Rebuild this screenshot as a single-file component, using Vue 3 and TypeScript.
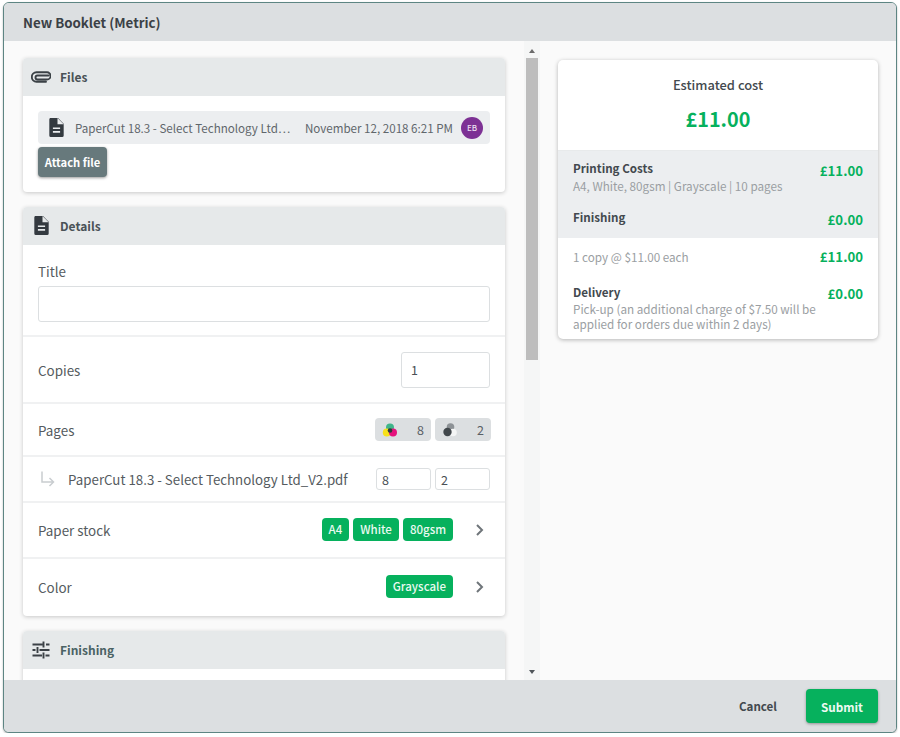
<script setup lang="ts">
const paperTags = ["A4", "White", "80gsm"];
</script>

<template>
  <div class="dialog">
    <header class="dialog-head">New Booklet (Metric)</header>

    <div class="dialog-body">
      <div class="left-pane">
        <div class="scroll-content">
          <section class="card">
            <div class="card-head">
              <svg class="head-icon" viewBox="0 0 20 20" width="20" height="20">
                <path d="M17.5 8.500H6.500a2 2 0 0 0 0 4h9.500a3.600 3.600 0 0 0 0-7.200H5.500a4.600 4.600 0 0 0 0 9.400H15" fill="none" stroke="#3b4146" stroke-width="1.900" stroke-linecap="round" />
              </svg>
              <span>Files</span>
            </div>
            <div class="files-body">
              <div class="file-row">
                <svg class="file-icon" viewBox="1 1 14 18.500" width="15" height="19">
                  <path d="M2 1h7.500L15 6.500V18a1.500 1.500 0 0 1-1.500 1.500h-11A1.500 1.500 0 0 1 1 18V2.500A1.500 1.500 0 0 1 2 1z" fill="#343a40" />
                  <path d="M9 1v6h6" fill="#eceef0" />
                  <path d="M4.500 11h7M4.500 14.500h7" stroke="#eceef0" stroke-width="1.500" />
                </svg>
                <span class="file-name">PaperCut 18.3 - Select Technology Ltd…</span>
                <span class="file-date">November 12, 2018 6:21 PM</span>
                <span class="avatar">EB</span>
              </div>
              <button class="attach-btn">Attach file</button>
            </div>
          </section>

          <section class="card">
            <div class="card-head">
              <svg class="head-icon doc" viewBox="1 1 14 18.500" width="15" height="19">
                <path d="M2 1h7.500L15 6.500V18a1.500 1.500 0 0 1-1.500 1.500h-11A1.500 1.500 0 0 1 1 18V2.500A1.500 1.500 0 0 1 2 1z" fill="#343a40" />
                <path d="M9 1v6h6" fill="#e6e9ea" />
                <path d="M4.500 11h7M4.500 14.500h7" stroke="#e6e9ea" stroke-width="1.500" />
              </svg>
              <span>Details</span>
            </div>

            <div class="row title-row">
              <label class="field-label">Title</label>
              <input class="text-input" type="text" />
            </div>

            <div class="row copies-row">
              <span class="field-label">Copies</span>
              <input class="text-input copies-input" type="text" value="1" />
            </div>

            <div class="row pages-row">
              <span class="field-label">Pages</span>
              <div class="pair chips">
                <div class="page-chip">
                  <svg viewBox="0 0 16 16" width="16" height="16">
                    <circle cx="8" cy="5.500" r="4" fill="#3fb58a" />
                    <circle cx="4.800" cy="10.500" r="4" fill="#f7e11b" />
                    <circle cx="11" cy="10.500" r="4" fill="#e5127d" />
                    <circle cx="8" cy="8.500" r="2.300" fill="#2f3a3a" />
                  </svg>
                  <span>8</span>
                </div>
                <div class="page-chip">
                  <svg viewBox="0 0 16 16" width="16" height="16">
                    <circle cx="8.500" cy="5" r="3.800" fill="#8d9296" />
                    <circle cx="11" cy="10.500" r="3.800" fill="#f4f5f5" />
                    <circle cx="5.500" cy="10" r="4.200" fill="#41474b" />
                  </svg>
                  <span>2</span>
                </div>
              </div>
            </div>

            <div class="row file-pages-row">
              <svg class="return-icon" viewBox="0 0 16 18" width="16" height="18">
                <path d="M2 1.500V12h11.500M9.500 8l4 4-4 4" fill="none" stroke="#c9cdd0" stroke-width="1.500" />
              </svg>
              <span class="sub-name">PaperCut 18.3 - Select Technology Ltd_V2.pdf</span>
              <div class="pair">
                <input class="text-input small-input" type="text" value="8" />
                <input class="text-input small-input" type="text" value="2" />
              </div>
            </div>

            <div class="row select-row">
              <span class="field-label">Paper stock</span>
              <div class="tags">
                <span v-for="tag in paperTags" :key="tag" class="tag">{{ tag }}</span>
              </div>
              <svg class="chevron" viewBox="0 0 10 14" width="10" height="14">
                <path d="M2 2l5 5-5 5" fill="none" stroke="#6f757a" stroke-width="2" />
              </svg>
            </div>

            <div class="row select-row last">
              <span class="field-label">Color</span>
              <div class="tags">
                <span class="tag">Grayscale</span>
              </div>
              <svg class="chevron" viewBox="0 0 10 14" width="10" height="14">
                <path d="M2 2l5 5-5 5" fill="none" stroke="#6f757a" stroke-width="2" />
              </svg>
            </div>
          </section>

          <section class="card">
            <div class="card-head">
              <svg class="head-icon" viewBox="0 0 20 20" width="20" height="20">
                <path d="M1.500 4.500h10M15 4.500h3.500M12.500 1.500v6M1.500 10h3M8.500 10h10M6.500 7v6M1.500 15.500h9.500M14.500 15.500h4M12.500 12.500v6" fill="none" stroke="#3b4146" stroke-width="1.900" />
              </svg>
              <span class="finishing">Finishing</span>
            </div>
            <div class="finishing-body"></div>
          </section>
        </div>

        <div class="scrollbar">
          <span class="arrow up"></span>
          <div class="track"><div class="thumb"></div></div>
          <span class="arrow down"></span>
        </div>
      </div>

      <aside class="right-pane">
        <div class="cost-card">
          <div class="cost-top">
            <div class="cost-title">Estimated cost</div>
            <div class="cost-total">£11.00</div>
          </div>

          <div class="cost-grey">
            <div class="cost-line">
              <div>
                <div class="line-title">Printing Costs</div>
                <div class="line-desc">A4, White, 80gsm | Grayscale | 10 pages</div>
              </div>
              <span class="price">£11.00</span>
            </div>
            <div class="cost-line finishing-line">
              <div class="line-title">Finishing</div>
              <span class="price">£0.00</span>
            </div>
          </div>

          <div class="cost-white">
            <div class="cost-line copy-line">
              <div class="line-desc">1 copy @ $11.00 each</div>
              <span class="price">£11.00</span>
            </div>
            <div class="cost-line delivery-line">
              <div>
                <div class="line-title">Delivery</div>
                <div class="line-desc">Pick-up (an additional charge of $7.50 will be applied for orders due within 2 days)</div>
              </div>
              <span class="price">£0.00</span>
            </div>
          </div>
        </div>
      </aside>
    </div>

    <footer class="dialog-foot">
      <button class="cancel-btn">Cancel</button>
      <button class="submit-btn">Submit</button>
    </footer>
  </div>
</template>

<style>
html,
body {
  margin: 0;
  background: #fff;
}
</style>

<style scoped>
.dialog {
  box-sizing: border-box;
  width: 894px;
  height: 731px;
  margin: 2px 0 0 3px;
  border: 1px solid #5d8583;
  border-radius: 6px;
  overflow: hidden;
  display: flex;
  flex-direction: column;
  background: #fafafa;
  color: #3b4146;
  font-family: "Noto Sans CJK SC", "Noto Sans", sans-serif;
  box-shadow: 0 1px 2px rgba(0, 0, 0, 0.3);
}

.dialog-head {
  flex: none;
  height: 38px;
  padding-left: 19px;
  line-height: 39px;
  font-size: 13.300px;
  font-weight: 700;
  background: #dcdfe1;
}

.dialog-body {
  flex: 1;
  min-height: 0;
  display: flex;
}

.left-pane {
  flex: none;
  width: 536px;
  display: flex;
  overflow: hidden;
}

.scroll-content {
  flex: 1;
  min-width: 0;
  padding: 17px 19px 0 19px;
  overflow: hidden;
  display: flex;
  flex-direction: column;
  gap: 15px;
}

.card {
  flex: none;
  background: #fff;
  border-radius: 4px;
  box-shadow: 0 1px 4px rgba(0, 0, 0, 0.2);
}

.card-head {
  height: 38px;
  padding-left: 8px;
  display: flex;
  align-items: center;
  gap: 9px;
  background: #e6e9ea;
  border-radius: 4px 4px 0 0;
  font-size: 12px;
  font-weight: 700;
  color: #4a5257;
}

.card-head span {
  margin-bottom: 2px;
}

.head-icon.doc {
  margin: 0 2px 1px 3px;
}

.finishing {
  color: #4a6264;
}

.files-body {
  padding: 15px 15px 15px;
}

.file-row {
  height: 33px;
  display: flex;
  align-items: center;
  padding: 0 7px 0 11px;
  background: #eceef0;
  border-radius: 4px;
  font-size: 11.600px;
  color: #5f666b;
}

.file-icon {
  flex: none;
}

.file-name {
  flex: 1;
  margin-left: 11px;
  white-space: nowrap;
}

.file-date {
  margin-right: 8px;
  white-space: nowrap;
}

.avatar {
  flex: none;
  width: 22px;
  height: 22px;
  border-radius: 50%;
  background: #7d3194;
  color: #eadff0;
  font-size: 8px;
  font-weight: 500;
  line-height: 22px;
  text-align: center;
}

.attach-btn {
  display: block;
  margin-top: 3px;
  width: 69px;
  height: 30px;
  padding: 0;
  border: none;
  border-radius: 4px;
  background: #67797c;
  color: #fff;
  font-family: inherit;
  font-size: 11.200px;
  font-weight: 700;
  box-shadow: 0 1px 3px rgba(0, 0, 0, 0.4);
}

.row {
  box-sizing: border-box;
  padding: 0 15px;
  border-bottom: 2px solid #f0f1f2;
  display: flex;
  align-items: center;
}

.row.last {
  border-bottom: none;
}

.field-label {
  font-size: 13.400px;
  color: #555b60;
}

.text-input {
  box-sizing: border-box;
  border: 1px solid #dcdfe1;
  border-radius: 3px;
  background: #fff;
  color: #4a5055;
  font-family: inherit;
  font-size: 12.500px;
  outline: none;
}

.title-row {
  height: 92px;
  padding-top: 16px;
  flex-direction: column;
  align-items: stretch;
}

.title-row .field-label {
  line-height: 20px;
  margin-bottom: 5px;
}

.title-row .text-input {
  height: 36px;
}

.copies-row {
  height: 67px;
  justify-content: space-between;
}

.copies-input {
  width: 89px;
  height: 36px;
  padding: 0 9px;
}

.pages-row {
  height: 53px;
  justify-content: space-between;
}

.pair {
  display: flex;
  gap: 4px;
}

.chips {
  margin-right: -1px;
}

.page-chip {
  box-sizing: border-box;
  width: 56px;
  height: 23px;
  padding: 0 7px;
  display: flex;
  align-items: center;
  justify-content: space-between;
  background: #dcdfe1;
  border-radius: 4px;
  font-size: 12.500px;
  color: #5a6065;
}

.file-pages-row {
  height: 46px;
}

.return-icon {
  flex: none;
  margin-left: 2px;
}

.sub-name {
  flex: 1;
  margin-left: 12px;
  font-size: 13.300px;
  color: #555b60;
  white-space: nowrap;
}

.small-input {
  width: 55px;
  height: 22px;
  padding: 0 5px;
}

.select-row {
  height: 56px;
}

.select-row.last {
  height: 57px;
  padding-bottom: 1px;
}

.select-row .field-label {
  flex: 1;
}

.tags {
  display: flex;
  gap: 4px;
  margin-bottom: 2px;
}

.tag {
  height: 23px;
  padding: 0 7px;
  background: #06b15d;
  border-radius: 4px;
  color: #eafaf1;
  font-size: 11.500px;
  font-weight: 500;
  line-height: 22px;
}

.chevron {
  margin: 0 5px 0 22px;
}

.finishing-body {
  height: 40px;
}

.scrollbar {
  flex: none;
  width: 16px;
  display: flex;
  flex-direction: column;
  align-items: center;
  background: #f5f6f6;
}

.arrow {
  flex: none;
  width: 0;
  height: 0;
  border-left: 3.500px solid transparent;
  border-right: 3.500px solid transparent;
}

.arrow.up {
  margin: 8px 0 5px;
  border-bottom: 4px solid #6b6b6b;
}

.arrow.down {
  margin: 6px 0;
  border-top: 4px solid #50555a;
}

.track {
  flex: 1;
  width: 12px;
}

.thumb {
  width: 100%;
  height: 302px;
  background: #bdbdbd;
}

.right-pane {
  flex: 1;
  min-width: 0;
  padding: 19px 18px 0 18px;
}

.cost-card {
  width: 320px;
  background: #fff;
  border-radius: 5px;
  overflow: hidden;
  box-shadow: 0 1px 4px rgba(0, 0, 0, 0.28);
}

.cost-top {
  box-sizing: border-box;
  height: 91px;
  padding-top: 15px;
  text-align: center;
  border-bottom: 1px solid #e8eaeb;
}

.cost-title {
  font-size: 12.900px;
  font-weight: 500;
  line-height: 20px;
  color: #43494e;
}

.cost-total {
  margin-top: 11px;
  font-size: 19.800px;
  font-weight: 700;
  line-height: 26px;
  color: #06b15d;
}

.cost-grey {
  box-sizing: border-box;
  height: 87px;
  padding: 9px 15px 0;
  background: #eceef0;
}

.cost-white {
  padding: 10px 15px 0;
  height: 101px;
  box-sizing: border-box;
}

.cost-line {
  display: flex;
  justify-content: space-between;
  align-items: flex-start;
}

.finishing-line {
  margin-top: 16px;
}

.copy-line .price {
  margin-top: -1px;
}

.delivery-line {
  margin-top: 18px;
}

.delivery-line > div {
  width: 250px;
}

.delivery-line .line-desc {
  margin-top: 0;
}

.delivery-line .price {
  margin-top: 0;
}

.line-title {
  font-size: 11.600px;
  font-weight: 700;
  line-height: 17px;
  color: #43494e;
}

.line-desc {
  font-size: 11.700px;
  line-height: 15px;
  margin-top: 1px;
  color: #9a9ea2;
}

.price {
  flex: none;
  margin-top: 1px;
  font-size: 13.200px;
  font-weight: 700;
  line-height: 19px;
  color: #06b15d;
}

.dialog-foot {
  flex: none;
  height: 52px;
  padding-right: 18px;
  display: flex;
  align-items: center;
  justify-content: flex-end;
  gap: 29px;
  background: #dcdfe1;
}

.cancel-btn {
  padding: 0;
  border: none;
  background: none;
  color: #43494e;
  font-family: inherit;
  font-size: 11.600px;
  font-weight: 700;
}

.submit-btn {
  width: 72px;
  height: 34px;
  padding: 0;
  border: none;
  border-radius: 4px;
  background: #06b15d;
  color: #eefaf3;
  font-family: inherit;
  font-size: 11.700px;
  font-weight: 700;
  box-shadow: 0 1px 3px rgba(0, 0, 0, 0.35);
}
</style>
